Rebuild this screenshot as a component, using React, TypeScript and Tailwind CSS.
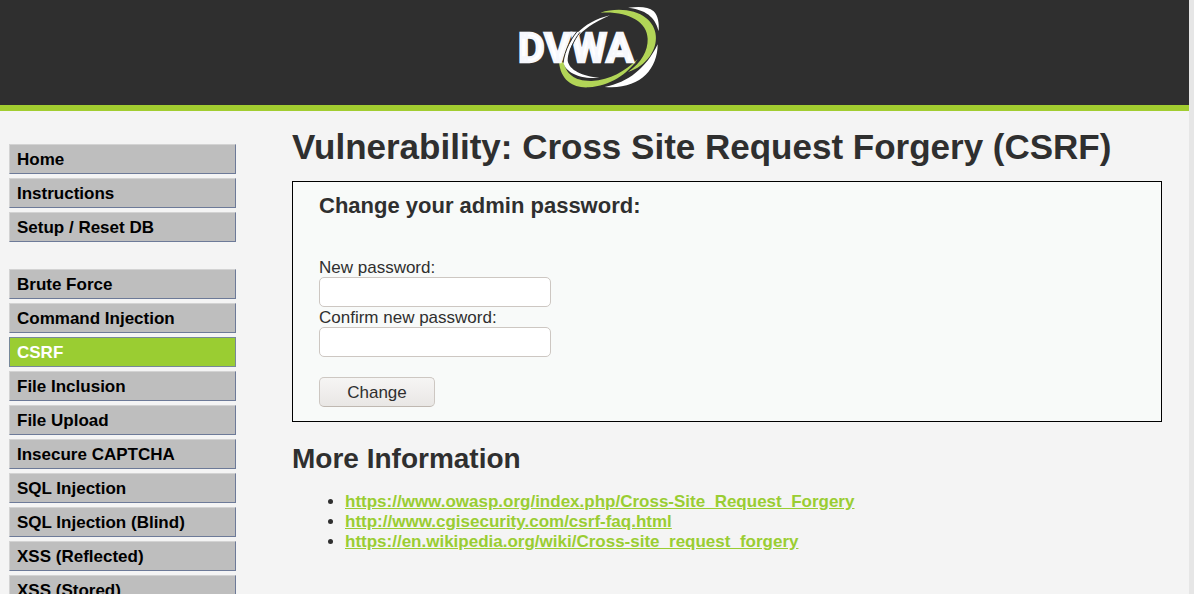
import React from 'react';

const menuGroups = [
  ['Home', 'Instructions', 'Setup / Reset DB'],
  [
    'Brute Force',
    'Command Injection',
    'CSRF',
    'File Inclusion',
    'File Upload',
    'Insecure CAPTCHA',
    'SQL Injection',
    'SQL Injection (Blind)',
    'XSS (Reflected)',
    'XSS (Stored)',
  ],
];

const links = [
  'https://www.owasp.org/index.php/Cross-Site_Request_Forgery',
  'http://www.cgisecurity.com/csrf-faq.html',
  'https://en.wikipedia.org/wiki/Cross-site_request_forgery',
];

const Logo = () => (
  <svg width="153" height="82" viewBox="54 18 459 246" role="img" aria-label="DVWA">
    {/* right hand swooshes */}
    <path d="M384 23 C420 19 445 20 461 34 C474 46 478 70 476 93 C468 62 449 30 384 23Z" fill="#fff" />
    <path d="M301 38 C350 23 405 28 438 54 C474 82 477 130 450 168 C433 191 412 207 384 216 C425 187 444 152 443 117 C442 63 381 33 301 38Z" fill="#b2d557" />
    <path d="M473 133 C473 210 417 270 314 261 C385 247 438 205 473 133Z" fill="#fff" />
    {/* bottom swoosh */}
    <path d="M177 184 C181 244 223 265 266 262 C330 257 381 224 413 177 C374 214 332 240 275 243 C223 244 199 222 191 187Z" fill="#b2d557" />
    <text
      x="54"
      y="185"
      fontFamily="Roboto, 'Liberation Sans', sans-serif"
      fontSize="123"
      fontWeight="700"
      fill="#fff"
      stroke="#f6f7fc"
      strokeWidth="7"
    >
      DVWA
    </text>
    {/* left swoosh, cut out of the letters by a dark edge */}
    <path d="M330 46 C244 66 200 124 190 182 C190 213 236 239 298 233 C247 229 208 210 203 182 C205 140 230 88 330 46Z" fill="#fff" />
    <path d="M240 85 C212 114 195 150 189 188 M240 97 C220 122 209 150 206 180" fill="none" stroke="#2f2f2f" strokeWidth="3" />
  </svg>
);

const MenuItem = ({ label, active }: { label: string; active: boolean }) => (
  <li>
    <a
      href="#"
      className={
        active
          ? 'block border border-[#778899] bg-[#9acd32] px-[7px] pt-0.5 text-[17px] leading-[26px] font-bold text-white'
          : 'block border border-t-[#d3d3d3] border-r-[#6d7a98] border-b-[#6d7a98] border-l-[#d3d3d3] bg-[#bebebe] px-[7px] pt-0.5 text-[17px] leading-[26px] font-bold text-black'
      }
    >
      {label}
    </a>
  </li>
);

const PasswordField = ({ id, label }: { id: string; label: string }) => (
  <div>
    <label htmlFor={id} className="block pt-0.5 leading-[18px]">
      {label}
    </label>
    <input
      id={id}
      type="password"
      className="block h-[30px] w-[232px] rounded-[5px] border border-[#cdc7c2] bg-white px-2"
    />
  </div>
);

const App = () => {
  return (
    <div className="min-h-screen border-r-[5px] border-[#e6e6e6] bg-[#f4f4f4] font-['Liberation_Sans',Arial,sans-serif] text-[17px] leading-5 text-[#2f2f2f]">
      <header className="flex justify-center border-b-[6px] border-[#a2cd30] bg-[#2f2f2f] pt-1.5 pb-[17px]">
        <Logo />
      </header>

      <div className="flex">
        <nav className="ml-[9px] flex w-[227px] shrink-0 flex-col gap-[27px] pt-[33px]">
          {menuGroups.map((group) => (
            <ul key={group[0]} className="flex flex-col gap-1">
              {group.map((item) => (
                <MenuItem key={item} label={item} active={item === 'CSRF'} />
              ))}
            </ul>
          ))}
        </nav>

        <main className="ml-14 mr-[27px] flex-1 pt-4">
          <h1 className="text-[35px] leading-10 font-bold">
            Vulnerability: Cross Site Request Forgery (CSRF)
          </h1>

          <div className="mt-3.5 border border-black bg-[#f8faf9] px-[26px] pt-2.5 pb-3.5">
            <h3 className="text-[22px] leading-7 font-bold">Change your admin password:</h3>
            <form className="mt-[37px]" onSubmit={(e) => e.preventDefault()}>
              <PasswordField id="password_new" label="New password:" />
              <PasswordField id="password_conf" label="Confirm new password:" />
              <button
                type="submit"
                className="mt-5 block h-[30px] w-[116px] rounded-[5px] border border-[#cdc7c2] border-b-[#bfb8b1] bg-linear-to-b from-[#f6f5f4] to-[#e9e7e5] pt-0.5"
              >
                Change
              </button>
            </form>
          </div>

          <h2 className="mt-[21px] text-[28px] leading-8 font-bold">More Information</h2>
          <ul className="mt-[17px] list-disc pl-[53px]">
            {links.map((link) => (
              <li key={link}>
                <a href={link} className="font-bold text-[#9acd32] underline">
                  {link}
                </a>
              </li>
            ))}
          </ul>
        </main>
      </div>
    </div>
  );
};

export default App;
